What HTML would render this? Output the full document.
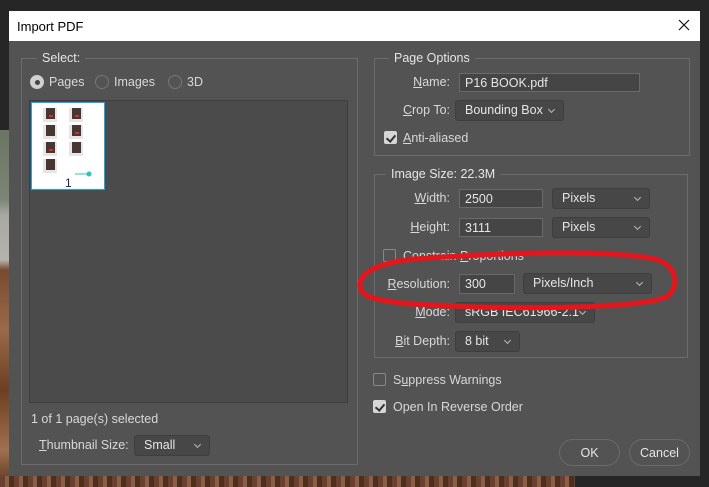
<!DOCTYPE html>
<html><head><style>
*{box-sizing:border-box;margin:0;padding:0}
body{width:709px;height:487px;overflow:hidden;background:#262626;position:relative;font-family:"Liberation Sans",sans-serif;font-size:12px;color:#e0e0e0}
.a{position:absolute}
.strip{left:0;top:130px;width:9px;height:357px;background:linear-gradient(#6b7564 0,#7d8676 70px,#a8a8a4 85px,#b5b2ac 130px,#7a4a30 140px,#9a6a4a 200px,#6e3e22 260px,#a07050 320px,#5a3420 357px)}
.bot{left:0;top:476px;width:575px;height:11px;background:repeating-linear-gradient(90deg,#6a4030 0 5px,#8a5e48 5px 9px,#4e2e1c 9px 14px)}
.dlg{left:9px;top:11px;width:691px;height:465px;background:#535353}
.title{left:9px;top:11px;width:691px;height:30px;background:#fff;color:#000;font-size:13px;padding:8px 0 0 8px}
.box{border:1px solid #6c6c6c}
.leg{background:#535353;padding:0 5px;font-size:12.5px;color:#e6e6e6}
.inp{background:#454545;border:1px solid #6a6a6a;padding:2px 0 0 5px;color:#e6e6e6;font-size:12.5px}
.sel{background:#474747;border:1px solid #3e3e3e;border-radius:3px;padding:2px 0 0 9px;color:#e6e6e6;font-size:12.5px}
.sel:after{content:"";position:absolute;right:9px;top:6px;width:4px;height:4px;border-right:1px solid #bbb;border-bottom:1px solid #bbb;transform:rotate(45deg)}
.lbl{color:#d8d8d8;font-size:12.5px;text-align:right}
.cb{width:13px;height:13px;border-radius:2px;border:1px solid #888}
.cb.on{background:#d6d6d6;border-color:#d6d6d6}
.cb.on:after{content:"";position:absolute;left:3px;top:1px;width:4px;height:7px;border-right:2px solid #333;border-bottom:2px solid #333;transform:rotate(40deg)}
.rd{width:14px;height:14px;border-radius:50%;border:1px solid #777}
.btn{border:1px solid #6a6a6a;border-radius:14px;text-align:center;padding-top:6px;font-size:12.5px;color:#e6e6e6}
u{text-decoration:underline}
</style></head><body>
<div class="a strip"></div>
<div class="a bot"></div>
<div class="a dlg"></div>
<div class="a title">Import PDF</div>
<svg class="a" style="left:678px;top:19px" width="12" height="12"><path d="M1 1L11 11M11 1L1 11" stroke="#111" stroke-width="1.2"/></svg>

<div class="a box" style="left:21px;top:58px;width:337px;height:407px"></div>
<div class="a leg" style="left:37px;top:51px">Select:</div>
<div class="a rd" style="left:30px;top:75px;background:#d0d0d0;border-color:#d0d0d0"></div>
<div class="a" style="left:35px;top:80px;width:5px;height:5px;border-radius:50%;background:#444"></div>
<div class="a lbl" style="left:49px;top:75px">Pages</div>
<div class="a rd" style="left:95px;top:75px"></div>
<div class="a lbl" style="left:114px;top:75px">Images</div>
<div class="a rd" style="left:168px;top:75px"></div>
<div class="a lbl" style="left:187px;top:75px">3D</div>
<div class="a" style="left:29px;top:100px;width:319px;height:303px;background:#4b4b4b;border:1px solid #3e3e3e"></div>
<div class="a" style="left:31px;top:102px;width:74px;height:88px;background:#fff;border:1px solid #1ea6e8"></div>
<svg class="a" style="left:32px;top:103px" width="72" height="86">
<g fill="#e6e6e6"><rect x="11" y="5" width="14" height="14"/><rect x="37" y="5" width="14" height="14"/><rect x="11" y="22" width="14" height="14"/><rect x="37" y="22" width="14" height="14"/><rect x="11" y="39" width="14" height="14"/><rect x="37" y="39" width="14" height="14"/><rect x="11" y="56" width="14" height="14"/></g>
<g fill="#4a3630"><rect x="14" y="5" width="9" height="11"/><rect x="40" y="5" width="9" height="11"/><rect x="14" y="22" width="9" height="11"/><rect x="40" y="22" width="9" height="11"/><rect x="14" y="39" width="9" height="11"/><rect x="40" y="39" width="9" height="11"/><rect x="14" y="56" width="9" height="11"/></g>
<g fill="#c33"><rect x="17" y="12" width="4" height="2"/><rect x="43" y="12" width="4" height="2"/><rect x="43" y="29" width="4" height="2"/><rect x="17" y="46" width="4" height="2"/></g>
<path d="M43 71H56" stroke="#2cc7b0"/><circle cx="57" cy="71" r="2.5" fill="#2cc7b0"/>
<text x="33" y="84" font-size="12" fill="#202060" font-family="Liberation Sans">1</text></svg>
<div class="a lbl" style="left:31px;top:412px;text-align:left">1 of 1 page(s) selected</div>
<div class="a lbl" style="left:39px;top:438px"><u>T</u>humbnail Size:</div>
<div class="a sel" style="left:134px;top:435px;width:76px;height:21px">Small</div>

<div class="a box" style="left:374px;top:58px;width:316px;height:98px"></div>
<div class="a leg" style="left:389px;top:51px">Page Options</div>
<div class="a lbl" style="left:380px;top:75px;width:70px"><u>N</u>ame:</div>
<div class="a inp" style="left:459px;top:73px;width:181px;height:19px">P16 BOOK.pdf</div>
<div class="a lbl" style="left:380px;top:103px;width:70px"><u>C</u>rop To:</div>
<div class="a sel" style="left:455px;top:100px;width:109px;height:21px">Bounding Box</div>
<div class="a cb on" style="left:384px;top:131px"></div>
<div class="a lbl" style="left:403px;top:131px"><u>A</u>nti-aliased</div>

<div class="a box" style="left:374px;top:174px;width:314px;height:184px"></div>
<div class="a leg" style="left:386px;top:167px">Image Size: 22.3M</div>
<div class="a lbl" style="left:380px;top:191px;width:70px"><u>W</u>idth:</div>
<div class="a inp" style="left:459px;top:189px;width:84px;height:19px">2500</div>
<div class="a sel" style="left:552px;top:188px;width:98px;height:21px">Pixels</div>
<div class="a lbl" style="left:380px;top:220px;width:70px"><u>H</u>eight:</div>
<div class="a inp" style="left:459px;top:218px;width:84px;height:19px">3111</div>
<div class="a sel" style="left:552px;top:217px;width:98px;height:21px">Pixels</div>
<div class="a cb" style="left:383px;top:249px"></div>
<div class="a lbl" style="left:403px;top:249px">Constrain <u>P</u>roportions</div>
<div class="a lbl" style="left:380px;top:277px;width:70px"><u>R</u>esolution:</div>
<div class="a inp" style="left:459px;top:274px;width:56px;height:20px">300</div>
<div class="a sel" style="left:523px;top:273px;width:129px;height:21px">Pixels/Inch</div>
<div class="a lbl" style="left:380px;top:305px;width:70px"><u>M</u>ode:</div>
<div class="a sel" style="left:455px;top:302px;width:140px;height:21px">sRGB IEC61966-2.1</div>
<div class="a lbl" style="left:380px;top:334px;width:70px"><u>B</u>it Depth:</div>
<div class="a sel" style="left:455px;top:331px;width:65px;height:21px">8 bit</div>
<svg class="a" style="left:355px;top:245px" width="330" height="72"><path d="M60 14C140 8 250 4 300 14C322 20 324 40 314 50C300 62 200 64 120 62C60 60 12 58 6 45C0 30 20 18 60 14Z" fill="none" stroke="#e8141c" stroke-width="5"/></svg>

<div class="a cb" style="left:373px;top:373px"></div>
<div class="a lbl" style="left:393px;top:373px">S<u>u</u>ppress Warnings</div>
<div class="a cb on" style="left:373px;top:400px"></div>
<div class="a lbl" style="left:393px;top:400px">Open In Reverse Order</div>
<div class="a btn" style="left:559px;top:439px;width:61px;height:27px">OK</div>
<div class="a btn" style="left:629px;top:439px;width:61px;height:27px">Cancel</div>
</body></html>
